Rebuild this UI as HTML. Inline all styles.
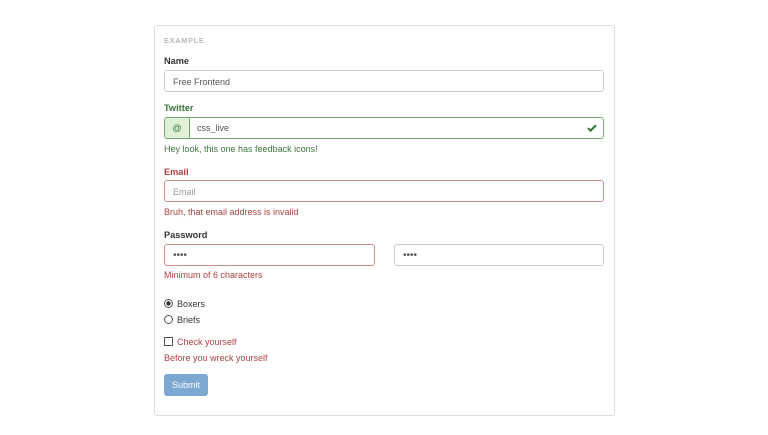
<!DOCTYPE html>
<html><head><style>
body{margin:0;width:768px;height:435px;background:#fff;font-family:"Liberation Sans",Arial,sans-serif;font-size:9px;color:#333;position:relative;overflow:hidden}
.a{position:absolute}
.card{left:154px;top:25px;width:459px;height:389px;border:1px solid #ddd;border-radius:3px;box-sizing:content-box}
.lbl{font-weight:bold;font-size:9.2px;line-height:12px}
.in{box-sizing:border-box;height:22px;border:1px solid #ccc;border-radius:3px;line-height:22px;padding-left:8px;background:#fff}
.g{color:#3c763d}.r{color:#a94442}
</style></head><body>
<div class="a card"></div>
<div class="a" style="left:164px;top:36px;font-size:7.5px;font-weight:bold;color:#bbb;letter-spacing:0.6px">EXAMPLE</div>
<div class="a lbl" style="left:164px;top:55px">Name</div>
<div class="a in" style="left:164px;top:70px;width:440px;color:#555">Free Frontend</div>
<div class="a lbl g" style="left:164px;top:102px">Twitter</div>
<div class="a in" style="left:164px;top:117px;width:440px;border-color:#78a86e;padding-left:0">
 <div class="a" style="left:0;top:0;width:24px;height:20px;line-height:21px;background:#dff0d8;border-right:1px solid #78a86e;color:#3c763d;text-align:center;border-radius:2px 0 0 2px">@</div>
 <div class="a" style="left:32px;top:0;color:#555;line-height:20px">css_live</div>
 <svg class="a" style="right:6px;top:6px" width="10" height="8" viewBox="0 0 10 8"><path d="M1 4.2L3.6 6.6L9 1.2" stroke="#3c763d" stroke-width="2.2" fill="none"/></svg>
</div>
<div class="a g" style="left:164px;top:144px">Hey look, this one has feedback icons!</div>
<div class="a lbl r" style="left:164px;top:166px">Email</div>
<div class="a in" style="left:164px;top:180px;width:440px;border-color:#d08c8b;color:#999">Email</div>
<div class="a r" style="left:164px;top:207px">Bruh, that email address is invalid</div>
<div class="a lbl" style="left:164px;top:229px">Password</div>
<div class="a in" style="left:164px;top:244px;width:211px;border-color:#d08c8b;color:#555;font-size:10px">••••</div>
<div class="a in" style="left:394px;top:244px;width:210px;color:#555;font-size:10px">••••</div>
<div class="a r" style="left:164px;top:270px">Minimum of 6 characters</div>
<svg class="a" style="left:164px;top:299px" width="9" height="9"><circle cx="4.5" cy="4.5" r="4" fill="#fff" stroke="#555"/><circle cx="4.5" cy="4.5" r="2.2" fill="#333"/></svg>
<div class="a" style="left:177px;top:299px">Boxers</div>
<svg class="a" style="left:164px;top:315px" width="9" height="9"><circle cx="4.5" cy="4.5" r="4" fill="#fff" stroke="#555"/></svg>
<div class="a" style="left:177px;top:315px">Briefs</div>
<div class="a" style="left:164px;top:337px;width:9px;height:9px;border:1px solid #555;box-sizing:border-box"></div>
<div class="a r" style="left:177px;top:337px">Check yourself</div>
<div class="a r" style="left:164px;top:353px">Before you wreck yourself</div>
<div class="a" style="left:164px;top:374px;width:44px;height:22px;background:#7ba7d0;border-radius:3px;color:#fff;text-align:center;line-height:22px">Submit</div>
</body></html>
